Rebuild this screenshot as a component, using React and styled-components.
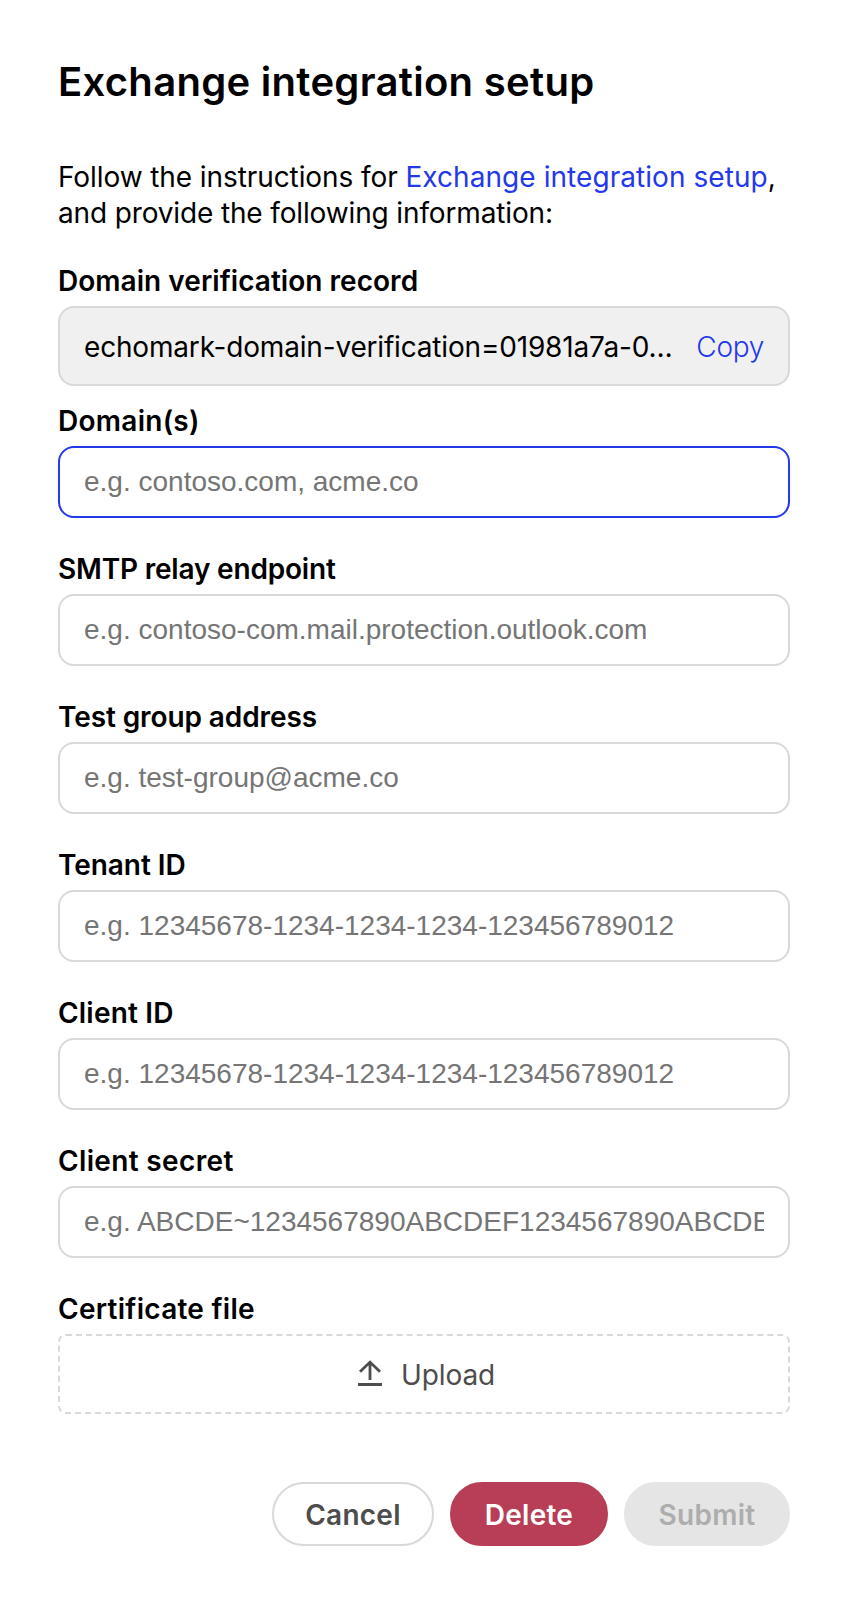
import styled, { createGlobalStyle } from "styled-components";

const GlobalStyle = createGlobalStyle`
  * {
    box-sizing: border-box;
  }
  body {
    margin: 0;
    background: #ffffff;
    color: #000000;
    font-family: Inter, "Liberation Sans", sans-serif;
    font-size: 28px;
    line-height: 36px;
  }
`;

const Container = styled.div`
  padding: 58px 58px 58px;
`;

const Title = styled.h1`
  margin: 0 0 53px;
  font-size: 40px;
  font-weight: 600;
  line-height: 48px;
  letter-spacing: 0.3px;
`;

const Intro = styled.p`
  margin: 0 0 32px;
  white-space: nowrap;
`;

const Text = styled.span`
  letter-spacing: ${(props) => props.$tracking || 0}px;
`;

const Link = styled.a`
  color: #2438eb;
  letter-spacing: 0.06px;
  text-decoration: none;
`;

const Form = styled.form`
  display: flex;
  flex-direction: column;
`;

const Field = styled.div`
  display: flex;
  flex-direction: column;
  gap: 7px;
  margin-bottom: ${(props) => props.$space || 33}px;
`;

const Label = styled.label`
  font-weight: 600;
  letter-spacing: ${(props) => props.$tracking || 0}px;
`;

const Record = styled.div`
  display: flex;
  align-items: center;
  justify-content: space-between;
  height: 80px;
  padding: 2px 24px 0;
  border: 2px solid #d9d9d9;
  border-radius: 16px;
  background: #f0f0f0;
  white-space: nowrap;
`;

const CopyButton = styled.button`
  padding: 0;
  border: none;
  background: none;
  color: #2438eb;
  font: inherit;
  font-weight: 350;
  letter-spacing: -0.3px;
`;

const Input = styled.input`
  width: 100%;
  height: 72px;
  padding: 0 24px;
  border: 2px solid ${(props) => (props.$active ? "#2438eb" : "#d9d9d9")};
  border-radius: 16px;
  outline: none;
  background: #ffffff;
  font-family: "Liberation Sans", Arial, sans-serif;
  font-size: 28px;

  &::placeholder {
    color: #757575;
    opacity: 1;
  }
`;

const Upload = styled.div`
  display: flex;
  align-items: center;
  justify-content: center;
  gap: 15px;
  height: 80px;
  padding-left: 1px;
  border: 2px dashed #d9d9d9;
  border-radius: 8px;
  color: #4d4d4d;
`;

const UploadText = styled.span`
  padding-top: 2px;
  letter-spacing: -0.1px;
`;

const Actions = styled.div`
  display: flex;
  justify-content: flex-end;
  gap: 16px;
  margin-top: 35px;
`;

const Button = styled.button`
  width: ${(props) => props.$width}px;
  height: 64px;
  padding: 2px 0 0;
  border: 2px solid ${(props) => props.$border || props.$bg};
  border-radius: 32px;
  background: ${(props) => props.$bg};
  color: ${(props) => props.$color};
  font: inherit;
  font-weight: 600;
  letter-spacing: 0.25px;
`;

const fields = [
  { id: "domains", label: "Domain(s)", placeholder: "e.g. contoso.com, acme.co", tracking: 0.27, active: true },
  {
    id: "smtp",
    label: "SMTP relay endpoint",
    placeholder: "e.g. contoso-com.mail.protection.outlook.com",
    tracking: -0.19,
  },
  { id: "group", label: "Test group address", placeholder: "e.g. test-group@acme.co", tracking: -0.1 },
  { id: "tenant", label: "Tenant ID", placeholder: "e.g. 12345678-1234-1234-1234-123456789012", tracking: -0.05 },
  { id: "client", label: "Client ID", placeholder: "e.g. 12345678-1234-1234-1234-123456789012", tracking: 0.2 },
  {
    id: "secret",
    label: "Client secret",
    placeholder: "e.g. ABCDE~1234567890ABCDEF1234567890ABCDEF",
    tracking: 0.35,
  },
];

const UploadIcon = () => (
  <svg width="32" height="32" viewBox="0 0 32 32" fill="none" stroke="currentColor" strokeWidth="2.8">
    <path d="M6 13.8 16 4.1l10 9.7M16 4.5V22" />
    <path d="M4 26.5h24" strokeWidth="3" />
  </svg>
);

const App = () => {
  return (
    <Container>
      <GlobalStyle />
      <Title>Exchange integration setup</Title>
      <Intro>
        <Text $tracking={-0.085}>Follow the instructions for </Text>
        <Link>Exchange integration setup</Link>,
        <br />
        <Text $tracking={-0.14}>and provide the following information:</Text>
      </Intro>
      <Form onSubmit={(e) => e.preventDefault()}>
        <Field $space={17}>
          <Label $tracking={0.04}>Domain verification record</Label>
          <Record>
            <Text $tracking={-0.18}>echomark-domain-verification=01981a7a-0…</Text>
            <CopyButton type="button">Copy</CopyButton>
          </Record>
        </Field>
        {fields.map((field) => (
          <Field key={field.id}>
            <Label htmlFor={field.id} $tracking={field.tracking}>
              {field.label}
            </Label>
            <Input id={field.id} placeholder={field.placeholder} $active={field.active} />
          </Field>
        ))}
        <Field>
          <Label $tracking={0.27}>Certificate file</Label>
          <Upload>
            <UploadIcon />
            <UploadText>Upload</UploadText>
          </Upload>
        </Field>
        <Actions>
          <Button type="button" $width={162} $bg="#ffffff" $border="#d9d9d9" $color="#4d4d4d">
            Cancel
          </Button>
          <Button type="button" $width={158} $bg="#b83d56" $color="#ffffff">
            Delete
          </Button>
          <Button type="submit" disabled $width={166} $bg="#e5e5e5" $color="#adadad">
            Submit
          </Button>
        </Actions>
      </Form>
    </Container>
  );
};

export default App;
